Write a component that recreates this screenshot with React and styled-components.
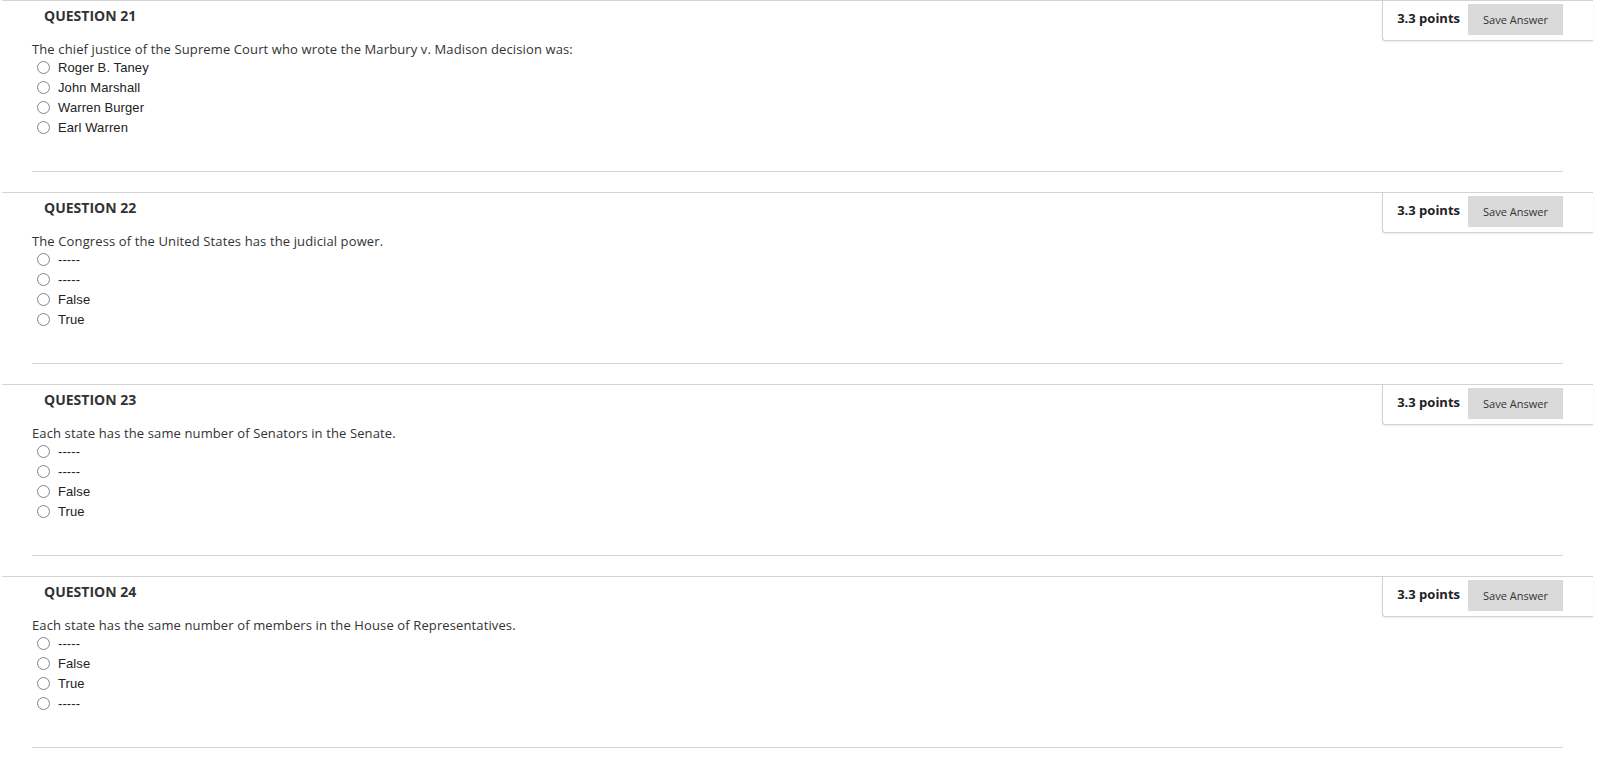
import styled, { createGlobalStyle } from "styled-components";

const GlobalStyle = createGlobalStyle`
  body {
    margin: 0;
    background: #fff;
    font-family: "Open Sans", "Liberation Sans", sans-serif;
  }
`;

const Page = styled.div`
  padding: 0 6px 0 2px;
`;

const Block = styled.section`
  height: 192px;
  box-sizing: border-box;
  border-top: 1px solid #d3d3d3;
  display: flex;
  flex-direction: column;
`;

const HeaderRow = styled.div`
  display: flex;
  justify-content: space-between;
  align-items: flex-start;
  height: 40px;
`;

const Title = styled.h3`
  margin: 6px 0 0 42px;
  font-size: 14px;
  line-height: 18px;
  font-weight: 700;
  color: #333;
  text-transform: uppercase;
`;

const PointsBox = styled.div`
  display: flex;
  align-items: flex-start;
  gap: 8px;
  box-sizing: border-box;
  height: 40px;
  padding: 3px 30px 0 14px;
  border-left: 1px solid #d3d3d3;
  border-bottom: 1px solid #d3d3d3;
  border-bottom-left-radius: 3px;
  box-shadow: 0 1px 2px rgba(0, 0, 0, 0.08);
`;

const Points = styled.span`
  font-size: 13px;
  font-weight: 700;
  line-height: 29px;
  color: #222;
`;

const SaveButton = styled.button`
  width: 95px;
  height: 31px;
  border: none;
  background: #dadada;
  font-family: "Open Sans", sans-serif;
  font-size: 11px;
  color: #333;
  padding: 0;
`;

const Body = styled.div`
  padding: 0 30px;
  display: flex;
  flex-direction: column;
  flex: 1;
`;

const Prompt = styled.p`
  margin: 0;
  font-size: 13px;
  letter-spacing: 0.12px;
  line-height: 17px;
  color: #333;
`;

const OptionList = styled.ul`
  list-style: none;
  margin: -1px 0 0;
  padding: 0 0 0 5px;
`;

const Option = styled.li`
  display: flex;
  align-items: center;
  height: 20px;
  font-family: "Liberation Sans", Arial, sans-serif;
  font-size: 13px;
  letter-spacing: 0.1px;
  color: #222;
`;

const Radio = styled.span`
  width: 13px;
  height: 13px;
  box-sizing: border-box;
  border: 1px solid #858585;
  border-radius: 50%;
  background: #fff;
  margin-right: 8px;
`;

const Rule = styled.hr`
  margin: auto 0 20px;
  border: none;
  border-top: 1px solid #d3d3d3;
`;

const questions = [
  {
    num: 21,
    text: "The chief justice of the Supreme Court who wrote the Marbury v. Madison decision was:",
    options: ["Roger B. Taney", "John Marshall", "Warren Burger", "Earl Warren"],
  },
  {
    num: 22,
    text: "The Congress of the United States has the judicial power.",
    options: ["-----", "-----", "False", "True"],
  },
  {
    num: 23,
    text: "Each state has the same number of Senators in the Senate.",
    options: ["-----", "-----", "False", "True"],
  },
  {
    num: 24,
    text: "Each state has the same number of members in the House of Representatives.",
    options: ["-----", "False", "True", "-----"],
  },
];

function Question({ q }) {
  return (
    <Block>
      <HeaderRow>
        <Title>Question {q.num}</Title>
        <PointsBox>
          <Points>3.3 points</Points>
          <SaveButton>Save Answer</SaveButton>
        </PointsBox>
      </HeaderRow>
      <Body>
        <Prompt>{q.text}</Prompt>
        <OptionList>
          {q.options.map((o, i) => (
            <Option key={i}>
              <Radio />
              {o}
            </Option>
          ))}
        </OptionList>
        <Rule />
      </Body>
    </Block>
  );
}

export default function App() {
  return (
    <Page>
      <GlobalStyle />
      {questions.map((q) => (
        <Question key={q.num} q={q} />
      ))}
    </Page>
  );
}
